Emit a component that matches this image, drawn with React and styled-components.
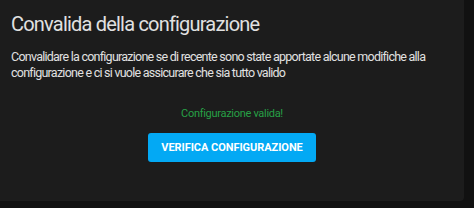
import React from 'react'
import styled, { createGlobalStyle } from 'styled-components'

const GlobalStyle = createGlobalStyle`
  html, body {
    margin: 0;
    padding: 0;
    background: #111111;
    font-family: Roboto, "Liberation Sans", sans-serif;
  }
`

const Page = styled.div`
  width: 474px;
  height: 208px;
  overflow: hidden;
  background: #111111;
`

const Card = styled.div`
  width: 464px;
  height: 201px;
  box-sizing: border-box;
  background: #1c1c1c;
  border-radius: 0 0 4px 0;
  padding: 10px 11px 0 11px;
  display: flex;
  flex-direction: column;
`

const Title = styled.h1`
  margin: 0;
  font-size: 20px;
  font-weight: 400;
  letter-spacing: -0.8px;
  color: #e1e1e1;
  line-height: 28px;
`

const Description = styled.p`
  margin: 11px 0 0 0;
  font-size: 12.5px;
  letter-spacing: -0.75px;
  line-height: 15.5px;
  color: #e1e1e1;
`

const Actions = styled.div`
  display: flex;
  flex-direction: column;
  align-items: center;
  margin-top: 27px;
  gap: 12px;
`

const Status = styled.div`
  font-size: 11px;
  line-height: 14px;
  letter-spacing: -0.3px;
  color: #27a046;
`

const Button = styled.button`
  height: 29px;
  padding: 0 13px;
  border: none;
  border-radius: 3px;
  background: #03a9f4;
  color: #ffffff;
  font-family: Roboto, "Liberation Sans", sans-serif;
  font-weight: 700;
  font-size: 11px;
  letter-spacing: -0.05px;
  text-transform: uppercase;
`

export default function App() {
  return (
    <Page>
      <GlobalStyle />
      <Card>
        <Title>Convalida della configurazione</Title>
        <Description>
          Convalidare la configurazione se di recente sono state apportate alcune modifiche alla
          configurazione e ci si vuole assicurare che sia tutto valido
        </Description>
        <Actions>
          <Status>Configurazione valida!</Status>
          <Button>Verifica configurazione</Button>
        </Actions>
      </Card>
    </Page>
  )
}
